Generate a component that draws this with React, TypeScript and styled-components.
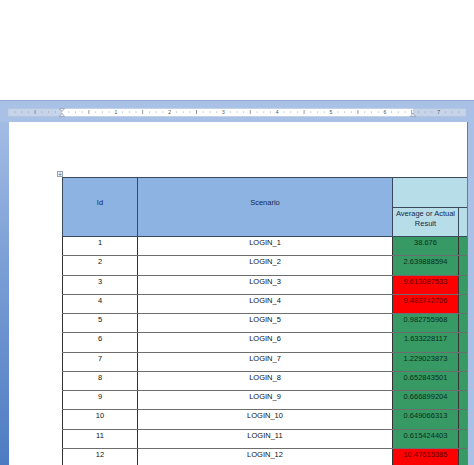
import React from 'react';
import styled, { createGlobalStyle } from 'styled-components';

const Global = createGlobalStyle`
  html, body { margin: 0; padding: 0; background: #fff; }
  body { width: 474px; height: 465px; overflow: hidden; font-family: "Liberation Sans", Arial, sans-serif; }
`;

const Screen = styled.div`
  width: 474px;
  height: 465px;
  overflow: hidden;
  display: flex;
  flex-direction: column;
  background: #fff;
`;

const TopBlank = styled.div`
  height: 100px;
  flex: none;
  background: #fff;
`;

const Workspace = styled.div`
  flex: 1;
  display: flex;
  flex-direction: column;
  background: #a9c1e6;
  border-top: 1px solid #8fa9d6;
`;

const RulerBar = styled.div`
  height: 21px;
  flex: none;
  padding: 2px 0 0 8px;
  box-sizing: border-box;
`;

const PageRow = styled.div`
  flex: 1;
  display: flex;
  min-height: 0;
`;

const SideStrip = styled.div`
  width: 9px;
  flex: none;
  background: linear-gradient(to bottom, #a3bce4 0%, #7c9fd6 40%, #4d7bc2 100%);
`;

const Page = styled.div`
  width: 459px;
  flex: none;
  background: #fff;
  border-right: 1px solid #6a7b94;
  box-sizing: border-box;
  padding: 55px 0 0 53px;
  position: relative;
  overflow: hidden;
`;

const MoveHandle = styled.div`
  position: absolute;
  left: 48px;
  top: 49px;
  width: 6px;
  height: 6px;
  border: 1px solid #9aa4b4;
  background: #f4f6f9;
  box-sizing: border-box;
  display: flex;
  align-items: center;
  justify-content: center;
  font-size: 7px;
  line-height: 1;
  color: #55627a;
`;

const Table = styled.table`
  border-collapse: collapse;
  table-layout: fixed;
  width: 405px;
  font-size: 7.5px;
`;

const HeadCell = styled.td<{ $tone: 'blue' | 'light'; $h?: number; $valign?: string }>`
  background: ${p => (p.$tone === 'blue' ? '#8db3e2' : '#b7dde8')};
  border: 1px solid #3a4a5c;
  color: #15294a;
  text-align: center;
  vertical-align: ${p => p.$valign || 'middle'};
  height: ${p => p.$h ?? 28}px;
  padding: 0 0 ${p => (p.$valign === 'top' ? 0 : 9)}px 0;
  line-height: 10px;
  box-sizing: border-box;
`;

const SubHead = styled.div`
  padding-top: 1px;
`;

const Row = styled.tr`
  height: 19.25px;
`;

const Cell = styled.td<{ $fill?: 'green' | 'red' }>`
  border-left: 1px solid #333;
  border-right: 1px solid #333;
  border-top: 1px solid #6d6d6d;
  border-bottom: 1px solid #6d6d6d;
  background: ${p => (p.$fill === 'green' ? '#379964' : p.$fill === 'red' ? '#ff0000' : '#fff')};
  color: ${p => (p.$fill === 'green' ? '#08301a' : p.$fill === 'red' ? '#5c0000' : '#111')};
  text-align: center;
  vertical-align: top;
  padding: 1px 0 0 0;
  line-height: 10px;
  white-space: nowrap;
  overflow: hidden;
`;

const ticks = () => {
  const items: React.ReactNode[] = [];
  const unit = 53.8;
  const origin = 54;
  for (let i = -8; i <= 64; i++) {
    const x = origin + (i * unit) / 8;
    if (x < 1 || x > 456) continue;
    const mod = ((i % 8) + 8) % 8;
    if (mod === 0) {
      const n = Math.abs(i / 8);
      if (n === 0) continue;
      items.push(
        <text key={`n${i}`} x={x} y={6.2} fontSize={5} textAnchor="middle" fill="#4a4f58" fontFamily="Liberation Sans, Arial, sans-serif">
          {n}
        </text>
      );
    } else if (mod === 4) {
      items.push(<line key={`t${i}`} x1={x} x2={x} y1={2} y2={6} stroke="#7a808a" strokeWidth={0.8} />);
    } else {
      items.push(<rect key={`d${i}`} x={x - 0.4} y={3.6} width={0.9} height={0.9} fill="#8a9099" />);
    }
  }
  return items;
};

const RulerSvg = () => (
  <svg width="458" height="9" viewBox="0 0 458 9">
    <rect x="0" y="0.5" width="458" height="8" fill="#c6d4ea" />
    <rect x="54" y="0.5" width="351" height="8" fill="#ffffff" />
    <rect x="0" y="0.5" width="458" height="8" fill="none" stroke="#b2c2db" strokeWidth="0.6" />
    {ticks()}
    <path d="M51.5 0.5 L56.5 0.5 L54 3.5 Z" fill="#e9eef6" stroke="#7d8ba2" strokeWidth="0.6" />
    <path d="M51.5 8.5 L56.5 8.5 L54 5 Z" fill="#e9eef6" stroke="#7d8ba2" strokeWidth="0.6" />
    <path d="M402.5 8.5 L407.5 8.5 L405 5 Z" fill="#e9eef6" stroke="#7d8ba2" strokeWidth="0.6" />
  </svg>
);

const rows: { id: number; value: string; fill: 'green' | 'red' }[] = [
  { id: 1, value: '38.676', fill: 'green' },
  { id: 2, value: '2.639888594', fill: 'green' },
  { id: 3, value: '9.613087533', fill: 'red' },
  { id: 4, value: '9.483742706', fill: 'red' },
  { id: 5, value: '0.982755968', fill: 'green' },
  { id: 6, value: '1.633228117', fill: 'green' },
  { id: 7, value: '1.229023873', fill: 'green' },
  { id: 8, value: '0.652843501', fill: 'green' },
  { id: 9, value: '0.666899204', fill: 'green' },
  { id: 10, value: '0.649066313', fill: 'green' },
  { id: 11, value: '0.615424403', fill: 'green' },
  { id: 12, value: '10.47615385', fill: 'red' },
];

export default function App() {
  return (
    <>
      <Global />
      <Screen>
        <TopBlank />
        <Workspace>
          <RulerBar>
            <RulerSvg />
          </RulerBar>
          <PageRow>
            <SideStrip />
            <Page>
              <MoveHandle>+</MoveHandle>
              <Table>
                <colgroup>
                  <col style={{ width: 75 }} />
                  <col style={{ width: 255 }} />
                  <col style={{ width: 66 }} />
                  <col style={{ width: 9 }} />
                </colgroup>
                <tbody>
                  <tr>
                    <HeadCell $tone="blue" rowSpan={2}>Id</HeadCell>
                    <HeadCell $tone="blue" rowSpan={2}>Scenario</HeadCell>
                    <HeadCell $tone="light" colSpan={2} $h={30} />
                  </tr>
                  <tr>
                    <HeadCell $tone="light" $h={29} $valign="top">
                      <SubHead>Average or Actual<br />Result</SubHead>
                    </HeadCell>
                    <HeadCell $tone="light" $h={29} $valign="top" />
                  </tr>
                  {rows.map(r => (
                    <Row key={r.id}>
                      <Cell>{r.id}</Cell>
                      <Cell>LOGIN_{r.id}</Cell>
                      <Cell $fill={r.fill}>{r.value}</Cell>
                      <Cell $fill="green" />
                    </Row>
                  ))}
                </tbody>
              </Table>
            </Page>
          </PageRow>
        </Workspace>
      </Screen>
    </>
  );
}
